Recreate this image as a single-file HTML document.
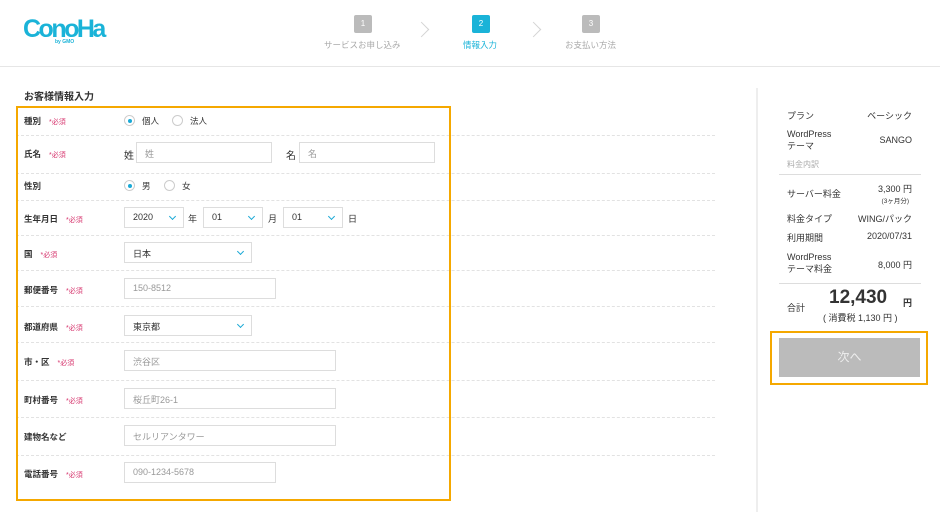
<!DOCTYPE html>
<html><head><meta charset="utf-8"><style>
*{margin:0;padding:0;box-sizing:border-box}
body{width:940px;height:512px;background:#fff;font-family:"Liberation Sans","Noto Sans CJK JP",sans-serif;color:#333;position:relative;overflow:hidden;font-size:9px}
.a{position:absolute;white-space:nowrap}
.hr{position:absolute;left:16px;width:699px;border-top:1px dashed #e2e2e2}
.lab{position:absolute;left:24px;font-size:8.5px;font-weight:bold;color:#333}
.req{color:#d6336c;font-weight:normal;font-size:7px;margin-left:8px}
.in{position:absolute;border:1px solid #ddd;background:#fff;height:21px;font-size:9px;color:#999;padding:4px 0 0 8px}
.sel{color:#333}
.sel:after{content:"";position:absolute;right:8px;top:6px;width:4px;height:4px;border-right:1.5px solid #1aa9d6;border-bottom:1.5px solid #1aa9d6;transform:rotate(45deg)}
.rd{position:absolute;width:11px;height:11px;border:1px solid #ccc;border-radius:50%;background:#fff}
.rd.on:after{content:"";position:absolute;left:2.5px;top:2.5px;width:4px;height:4px;border-radius:50%;background:#1aa9d6}
.sb{position:absolute;font-size:9px;color:#333}
.chev{position:absolute;width:11px;height:11px;border-right:1px solid #d4d4d4;border-top:1px solid #d4d4d4;transform:rotate(45deg)}
</style></head><body>
<div class="a" style="left:23px;top:15px;font-size:25px;font-weight:bold;color:#1ab3d8;letter-spacing:-2.5px">ConoHa</div>
<div class="a" style="left:55px;top:39px;font-size:5px;font-weight:bold;color:#1ab3d8">by GMO</div>
<div style="position:absolute;left:0;top:66px;width:940px;border-top:1px solid #e6e6e6"></div>
<div class="a" style="left:354px;top:15px;width:18px;height:18px;background:#bbb;color:#fff;font-size:8px;text-align:center;line-height:18px;border-radius:2px">1</div>
<div class="a" style="left:324px;top:39px;font-size:8.5px;color:#aaa">サービスお申し込み</div>
<div class="chev" style="left:416px;top:24px"></div>
<div class="a" style="left:472px;top:15px;width:18px;height:18px;background:#1ab3d8;color:#fff;font-size:8px;text-align:center;line-height:18px;border-radius:2px">2</div>
<div class="a" style="left:463px;top:39px;font-size:8.5px;color:#1ab3d8">情報入力</div>
<div class="chev" style="left:528px;top:24px"></div>
<div class="a" style="left:582px;top:15px;width:18px;height:18px;background:#bbb;color:#fff;font-size:8px;text-align:center;line-height:18px;border-radius:2px">3</div>
<div class="a" style="left:565px;top:39px;font-size:8.5px;color:#aaa">お支払い方法</div>

<div class="a" style="left:24px;top:88px;font-size:10px;font-weight:bold">お客様情報入力</div>

<div class="hr" style="top:135px"></div><div class="hr" style="top:173px"></div><div class="hr" style="top:200px"></div><div class="hr" style="top:235px"></div><div class="hr" style="top:270px"></div><div class="hr" style="top:306px"></div><div class="hr" style="top:342px"></div><div class="hr" style="top:380px"></div><div class="hr" style="top:417px"></div><div class="hr" style="top:455px"></div>

<div class="lab" style="top:115px">種別<span class="req">*必須</span></div>
<div class="rd on" style="left:124px;top:115px"></div><div class="a" style="left:142px;top:115px;font-size:8.5px">個人</div>
<div class="rd" style="left:172px;top:115px"></div><div class="a" style="left:190px;top:115px;font-size:8.5px">法人</div>

<div class="lab" style="top:148px">氏名<span class="req">*必須</span></div>
<div class="a" style="left:124px;top:147px;font-size:10px">姓</div>
<div class="in" style="left:136px;top:142px;width:136px">姓</div>
<div class="a" style="left:286px;top:147px;font-size:10px">名</div>
<div class="in" style="left:299px;top:142px;width:136px">名</div>

<div class="lab" style="top:180px">性別</div>
<div class="rd on" style="left:124px;top:180px"></div><div class="a" style="left:142px;top:180px;font-size:8.5px">男</div>
<div class="rd" style="left:164px;top:180px"></div><div class="a" style="left:182px;top:180px;font-size:8.5px">女</div>

<div class="lab" style="top:213px">生年月日<span class="req">*必須</span></div>
<div class="in sel" style="left:124px;top:207px;width:60px">2020</div><div class="a" style="left:188px;top:212px;font-size:9px">年</div>
<div class="in sel" style="left:203px;top:207px;width:60px">01</div><div class="a" style="left:268px;top:212px;font-size:9px">月</div>
<div class="in sel" style="left:283px;top:207px;width:60px">01</div><div class="a" style="left:348px;top:212px;font-size:9px">日</div>

<div class="lab" style="top:248px">国<span class="req">*必須</span></div>
<div class="in sel" style="left:124px;top:242px;width:128px">日本</div>

<div class="lab" style="top:284px">郵便番号<span class="req">*必須</span></div>
<div class="in" style="left:124px;top:278px;width:152px">150-8512</div>

<div class="lab" style="top:321px">都道府県<span class="req">*必須</span></div>
<div class="in sel" style="left:124px;top:315px;width:128px">東京都</div>

<div class="lab" style="top:356px">市・区<span class="req">*必須</span></div>
<div class="in" style="left:124px;top:350px;width:212px">渋谷区</div>

<div class="lab" style="top:394px">町村番号<span class="req">*必須</span></div>
<div class="in" style="left:124px;top:388px;width:212px">桜丘町26-1</div>

<div class="lab" style="top:431px">建物名など</div>
<div class="in" style="left:124px;top:425px;width:212px">セルリアンタワー</div>

<div class="lab" style="top:468px">電話番号<span class="req">*必須</span></div>
<div class="in" style="left:124px;top:462px;width:152px">090-1234-5678</div>

<div style="position:absolute;left:16px;top:106px;width:435px;height:395px;border:2px solid #f5a800"></div>

<div style="position:absolute;left:756px;top:88px;height:424px;border-left:2px solid #eee"></div>
<div class="sb" style="left:787px;top:109px">プラン</div><div class="sb" style="right:28px;top:109px">ベーシック</div>
<div class="sb" style="left:787px;top:128px;line-height:12px">WordPress<br>テーマ</div><div class="sb" style="right:28px;top:135px">SANGO</div>
<div class="sb" style="left:787px;top:159px;color:#aaa;font-size:8px">料金内訳</div>
<div style="position:absolute;left:779px;top:174px;width:142px;border-top:1px solid #ddd"></div>
<div class="sb" style="left:787px;top:187px">サーバー料金</div><div class="sb" style="right:28px;top:182px">3,300 円</div>
<div class="sb" style="right:31px;top:195px;font-size:6.5px">(3ヶ月分)</div>
<div class="sb" style="left:787px;top:212px">料金タイプ</div><div class="sb" style="right:28px;top:212px">WING/パック</div>
<div class="sb" style="left:787px;top:231px">利用期間</div><div class="sb" style="right:28px;top:231px">2020/07/31</div>
<div class="sb" style="left:787px;top:251px;line-height:12px">WordPress<br>テーマ料金</div><div class="sb" style="right:28px;top:258px">8,000 円</div>
<div style="position:absolute;left:779px;top:283px;width:142px;border-top:1px solid #ddd"></div>
<div class="sb" style="left:787px;top:301px">合計</div>
<div class="sb" style="left:829px;top:287px;font-size:19px;font-weight:bold">12,430</div>
<div class="sb" style="left:903px;top:296px;font-weight:bold">円</div>
<div class="sb" style="left:823px;top:311px">( 消費税 1,130 円 )</div>
<div style="position:absolute;left:770px;top:331px;width:158px;height:54px;border:2px solid #f5a800"></div>
<div style="position:absolute;left:779px;top:338px;width:141px;height:39px;background:#bbb;color:#eee;font-size:12px;text-align:center;line-height:39px">次へ</div>
</body></html>
